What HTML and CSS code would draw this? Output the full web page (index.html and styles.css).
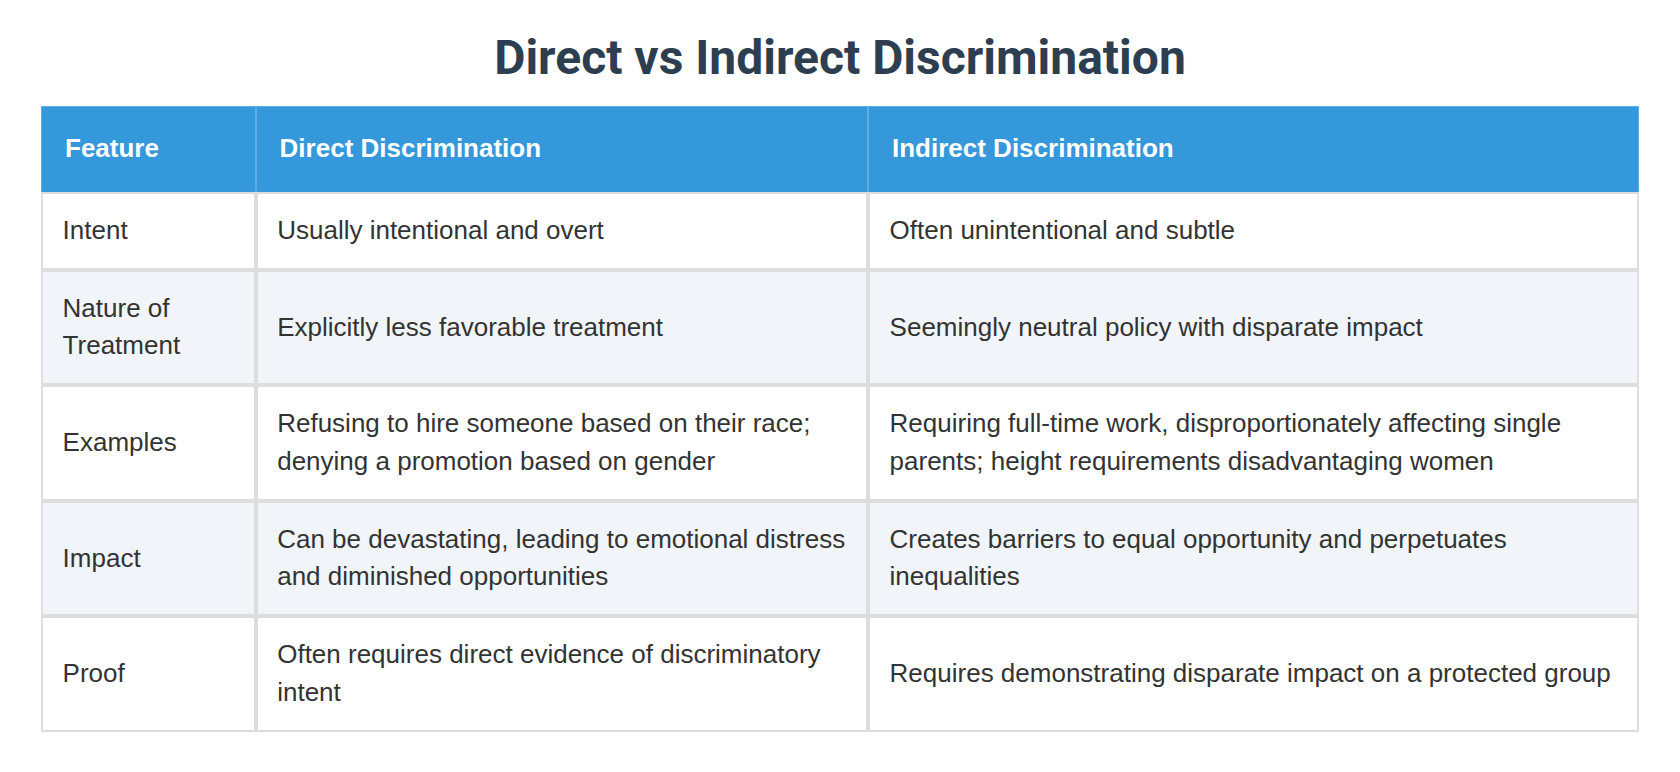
FILE: index.html
```html
<!DOCTYPE html>
<html lang="en">
<head>
<meta charset="utf-8">
<title>Direct vs Indirect Discrimination</title>
<link rel="stylesheet" href="styles.css">
</head>
<body>
<div class="page">
  <h1 class="title">Direct vs Indirect Discrimination</h1>
  <table class="compare">
    <colgroup>
      <col class="col-feature">
      <col class="col-direct">
      <col class="col-indirect">
    </colgroup>
    <thead>
      <tr>
        <th>Feature</th>
        <th>Direct Discrimination</th>
        <th>Indirect Discrimination</th>
      </tr>
    </thead>
    <tbody>
      <tr>
        <td>Intent</td>
        <td>Usually intentional and overt</td>
        <td>Often unintentional and subtle</td>
      </tr>
      <tr>
        <td>Nature of Treatment</td>
        <td>Explicitly less favorable treatment</td>
        <td>Seemingly neutral policy with disparate impact</td>
      </tr>
      <tr>
        <td>Examples</td>
        <td>Refusing to hire someone based on their race; denying a promotion based on gender</td>
        <td>Requiring full-time work, disproportionately affecting single parents; height requirements disadvantaging women</td>
      </tr>
      <tr>
        <td>Impact</td>
        <td>Can be devastating, leading to emotional distress and diminished opportunities</td>
        <td>Creates barriers to equal opportunity and perpetuates inequalities</td>
      </tr>
      <tr>
        <td>Proof</td>
        <td>Often requires direct evidence of discriminatory intent</td>
        <td>Requires demonstrating disparate impact on a protected group</td>
      </tr>
    </tbody>
  </table>
</div>
</body>
</html>
```

FILE: styles.css
```css
* { box-sizing: border-box; }

html, body {
  margin: 0;
  padding: 0;
  background: #ffffff;
}

body {
  font-family: "Liberation Sans", Arial, sans-serif;
  color: #333333;
}

.page {
  padding: 30px 41px 40px;
}

.title {
  margin: 0 0 20px;
  text-align: center;
  font-family: Roboto, "Liberation Sans", sans-serif;
  font-weight: 700;
  font-size: 48px;
  line-height: 56px;
  color: #2c3e50;
}

.compare {
  width: 100%;
  border-collapse: separate;
  border-spacing: 0;
  table-layout: fixed;
  font-size: 26px;
  line-height: 37.6px;
}

.col-feature { width: 214.6px; }
.col-direct { width: 612.4px; }
.col-indirect { width: auto; }

.compare th,
.compare td {
  text-align: left;
  vertical-align: middle;
  padding: 18.2px 18.2px 18.2px 19.6px;
  border: 2px solid #dddddd;
}

.compare th {
  background: #3498db;
  color: #ffffff;
  font-weight: 700;
  padding: 23px 21.6px 23px 23px;
  border-width: 1px;
  border-color: #5faee3;
  border-bottom-color: #3498db;
}

.compare tbody tr:nth-child(even) td {
  background: #f1f4f8;
}
```
